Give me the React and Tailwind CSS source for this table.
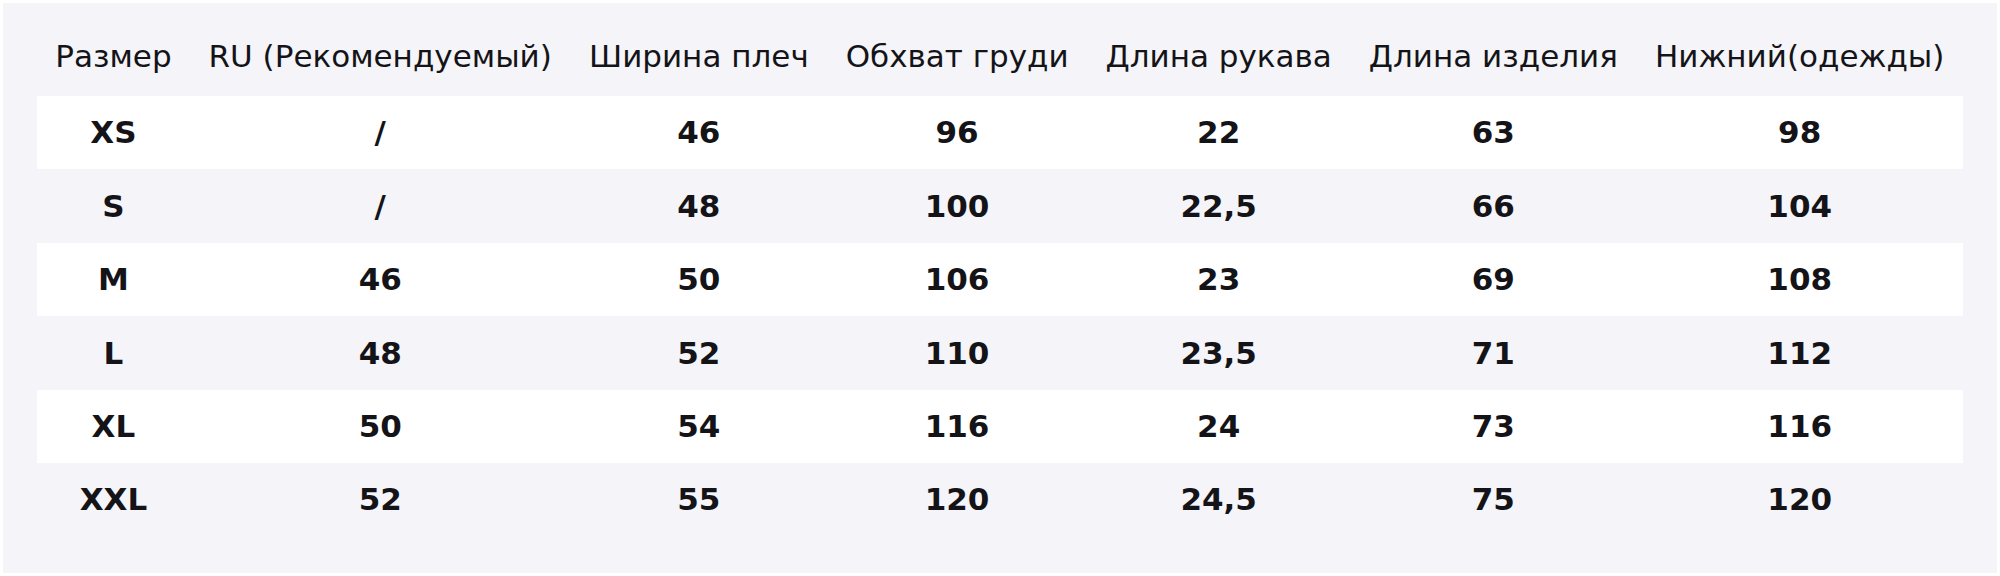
import React from 'react';

const headers = [
  'Размер',
  'RU (Рекомендуемый)',
  'Ширина плеч',
  'Обхват груди',
  'Длина рукава',
  'Длина изделия',
  'Нижний(одежды)',
];

const rows = [
  ['XS', '/', '46', '96', '22', '63', '98'],
  ['S', '/', '48', '100', '22,5', '66', '104'],
  ['M', '46', '50', '106', '23', '69', '108'],
  ['L', '48', '52', '110', '23,5', '71', '112'],
  ['XL', '50', '54', '116', '24', '73', '116'],
  ['XXL', '52', '55', '120', '24,5', '75', '120'],
];

export default function App() {
  return (
    <div className="w-[2000px] h-[576px] bg-white p-[3px]">
      <div
        className="h-full bg-[#f4f4f9] px-[34px] pt-[34px] pb-[37px] text-[#141418]"
        style={{ fontFamily: '"DejaVu Sans", "Noto Sans", sans-serif' }}
      >
        <table className="w-full border-collapse">
          <thead>
            <tr className="h-[59px]">
              {headers.map((h) => (
                <th key={h} className="px-[18px] pb-[20px] text-[31px] leading-none font-normal whitespace-nowrap text-center">
                  {h}
                </th>
              ))}
            </tr>
          </thead>
          <tbody>
            {rows.map((r, i) => (
              <tr key={r[0]} className={`h-[73.4px] ${i % 2 === 0 ? 'bg-white' : ''}`}>
                {r.map((c, j) => (
                  <td key={j} className="px-[18px] text-[31px] font-bold text-center whitespace-nowrap">
                    {c}
                  </td>
                ))}
              </tr>
            ))}
          </tbody>
        </table>
      </div>
    </div>
  );
}
